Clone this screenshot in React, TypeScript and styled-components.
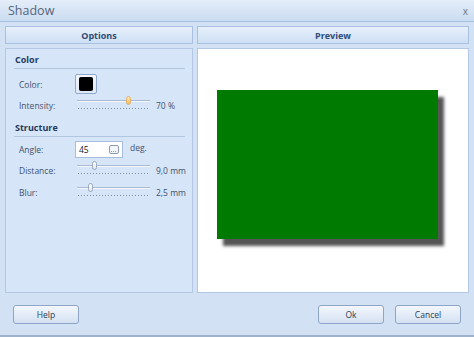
import React from "react";
import styled, { createGlobalStyle } from "styled-components";

const Global = createGlobalStyle`
  html, body { margin: 0; padding: 0; }
  body { width: 474px; height: 337px; overflow: hidden; font-family: "Open Sans", "DejaVu Sans", sans-serif; }
`;

const Dialog = styled.div`
  width: 474px;
  height: 337px;
  box-sizing: border-box;
  background: #d2e1f4;
  border-bottom: 2px solid #9fb2cb;
  display: flex;
  flex-direction: column;
`;

const TitleBar = styled.div`
  height: 22px;
  flex-shrink: 0;
  box-sizing: border-box;
  background: linear-gradient(#e4edf9, #cadcf1);
  border-bottom: 1px solid #a9bfdc;
  display: flex;
  align-items: center;
  justify-content: space-between;
  padding: 0 6px 0 8px;
`;

const Title = styled.span`
  font-size: 12.5px;
  color: #56647a;
`;

const Close = styled.span`
  font-size: 10px;
  color: #6c7789;
  margin-top: 1px;
`;

const Body = styled.div`
  display: grid;
  grid-template-columns: 188px 272px;
  grid-template-rows: 18px 245px;
  column-gap: 4px;
  row-gap: 4px;
  padding: 4px 5px 0 5px;
`;

const Header = styled.div`
  box-sizing: border-box;
  border: 1px solid #a9c0df;
  background: linear-gradient(#e7f0fb, #cddff4);
  display: flex;
  align-items: center;
  justify-content: center;
  font-size: 9px;
  font-weight: 700;
  color: #2f4b76;
`;

const Panel = styled.div`
  box-sizing: border-box;
  border: 1px solid #b3c8e4;
  background: #d7e5f8;
  padding: 4px 7px 0 8px;
  display: flex;
  flex-direction: column;
`;

const Section = styled.div<{ $top: number }>`
  margin-top: ${(p) => p.$top}px;
  height: 15px;
  box-sizing: border-box;
  border-bottom: 1px solid #b3c6e0;
  font-size: 9px;
  font-weight: 700;
  color: #1f3a60;
  line-height: 12px;
  padding-left: 1px;
`;

const Row = styled.div<{ $h: number; $top?: number }>`
  height: ${(p) => p.$h}px;
  margin-top: ${(p) => p.$top ?? 0}px;
  display: flex;
  align-items: center;
`;

const Label = styled.span`
  width: 61px;
  padding-left: 5px;
  box-sizing: border-box;
  font-size: 8.5px;
  color: #42536f;
  flex-shrink: 0;
  white-space: nowrap;
`;

const Swatch = styled.div`
  width: 22px;
  height: 20px;
  box-sizing: border-box;
  border: 1px solid #90a8c9;
  border-radius: 2px;
  background: linear-gradient(#f4f8fd, #dde8f6);
  display: flex;
  align-items: center;
  justify-content: center;
`;

const SwatchInner = styled.div`
  width: 14px;
  height: 14px;
  background: #000;
  border-radius: 2px;
`;

const SliderBox = styled.div`
  position: relative;
  width: 73px;
  height: 18px;
  margin-left: 2px;
  flex-shrink: 0;
`;

const Track = styled.div`
  position: absolute;
  left: 0;
  right: 0;
  top: 4px;
  height: 1px;
  background: #a9bbd3;
  border-bottom: 1px solid #f4f8fd;
`;

const Ticks = styled.div`
  position: absolute;
  left: 1px;
  right: 0;
  top: 12px;
  height: 1px;
  background-image: repeating-linear-gradient(90deg, #7f8fa6 0 1px, transparent 1px 3px);
`;

const Thumb = styled.div<{ $hot?: boolean }>`
  position: absolute;
  top: 0;
  width: 5px;
  height: 9px;
  margin-left: -2px;
  border-radius: 3px;
  box-sizing: border-box;
  border: 1px solid ${(p) => (p.$hot ? "#e1b36a" : "#9aa9bd")};
  background: ${(p) => (p.$hot ? "linear-gradient(#ffe9b8, #f6b95a)" : "linear-gradient(#ffffff, #dfe6ef)")};
`;

const Value = styled.span`
  margin-left: 6px;
  font-size: 8.5px;
  color: #42536f;
  white-space: nowrap;
`;

const Input = styled.div`
  width: 48px;
  height: 17px;
  box-sizing: border-box;
  border: 1px solid #a6bddb;
  background: #fff;
  display: flex;
  align-items: center;
  justify-content: space-between;
  padding: 0 3px 0 3px;
  font-size: 8.5px;
  color: #1a1a1a;
`;

const Unit = styled.span`
  margin-left: 7px;
  margin-top: -4px;
  font-size: 8.5px;
  color: #42536f;
`;

const Preview = styled.div`
  box-sizing: border-box;
  border: 1px solid #b3c8e4;
  background: #fff;
  padding: 41px 0 0 19px;
`;

const Shape = styled.div`
  width: 221px;
  height: 149px;
  background: #007a00;
  box-shadow: 6px 7px 3px #555;
`;

const Footer = styled.div`
  flex: 1;
  display: flex;
  align-items: flex-start;
  padding: 12px 13px 0 13px;
  box-sizing: border-box;
`;

const Button = styled.button<{ $gap?: number }>`
  width: 66px;
  height: 19px;
  margin-left: ${(p) => p.$gap ?? 0}px;
  box-sizing: border-box;
  border: 1px solid #8ea6c6;
  border-radius: 3px;
  background: linear-gradient(#f3f7fd, #d4e1f2);
  font-family: "Open Sans", "DejaVu Sans", sans-serif;
  font-size: 8.5px;
  color: #2d3c52;
  padding: 0;
`;

const Spacer = styled.div`
  flex: 1;
`;

function Slider({ pos, hot }: { pos: number; hot?: boolean }) {
  return (
    <SliderBox>
      <Track />
      <Ticks />
      <Thumb $hot={hot} style={{ left: pos }} />
    </SliderBox>
  );
}

export default function App() {
  return (
    <>
      <Global />
      <Dialog>
        <TitleBar>
          <Title>Shadow</Title>
          <Close>x</Close>
        </TitleBar>
        <Body>
          <Header>Options</Header>
          <Header>Preview</Header>
          <Panel>
            <Section $top={1}>Color</Section>
            <Row $h={20} $top={5}>
              <Label>Color:</Label>
              <Swatch>
                <SwatchInner />
              </Swatch>
            </Row>
            <Row $h={22}>
              <Label>Intensity:</Label>
              <Slider pos={51} hot />
              <Value>70 %</Value>
            </Row>
            <Section $top={6}>Structure</Section>
            <Row $h={17} $top={4}>
              <Label>Angle:</Label>
              <Input>
                <span>45</span>
                <svg width="10" height="9" viewBox="0 0 10 9">
                  <rect x="0.5" y="0.5" width="9" height="8" rx="1.5" fill="#f3f6fa" stroke="#8d9bb0" />
                  <line x1="2" y1="6.5" x2="8" y2="6.5" stroke="#8d9bb0" strokeDasharray="1 1" />
                </svg>
              </Input>
              <Unit>deg.</Unit>
            </Row>
            <Row $h={24}>
              <Label>Distance:</Label>
              <Slider pos={17} />
              <Value>9,0 mm</Value>
            </Row>
            <Row $h={20}>
              <Label>Blur:</Label>
              <Slider pos={13} />
              <Value>2,5 mm</Value>
            </Row>
          </Panel>
          <Preview>
            <Shape />
          </Preview>
        </Body>
        <Footer>
          <Button>Help</Button>
          <Spacer />
          <Button>Ok</Button>
          <Button $gap={11}>Cancel</Button>
        </Footer>
      </Dialog>
    </>
  );
}
